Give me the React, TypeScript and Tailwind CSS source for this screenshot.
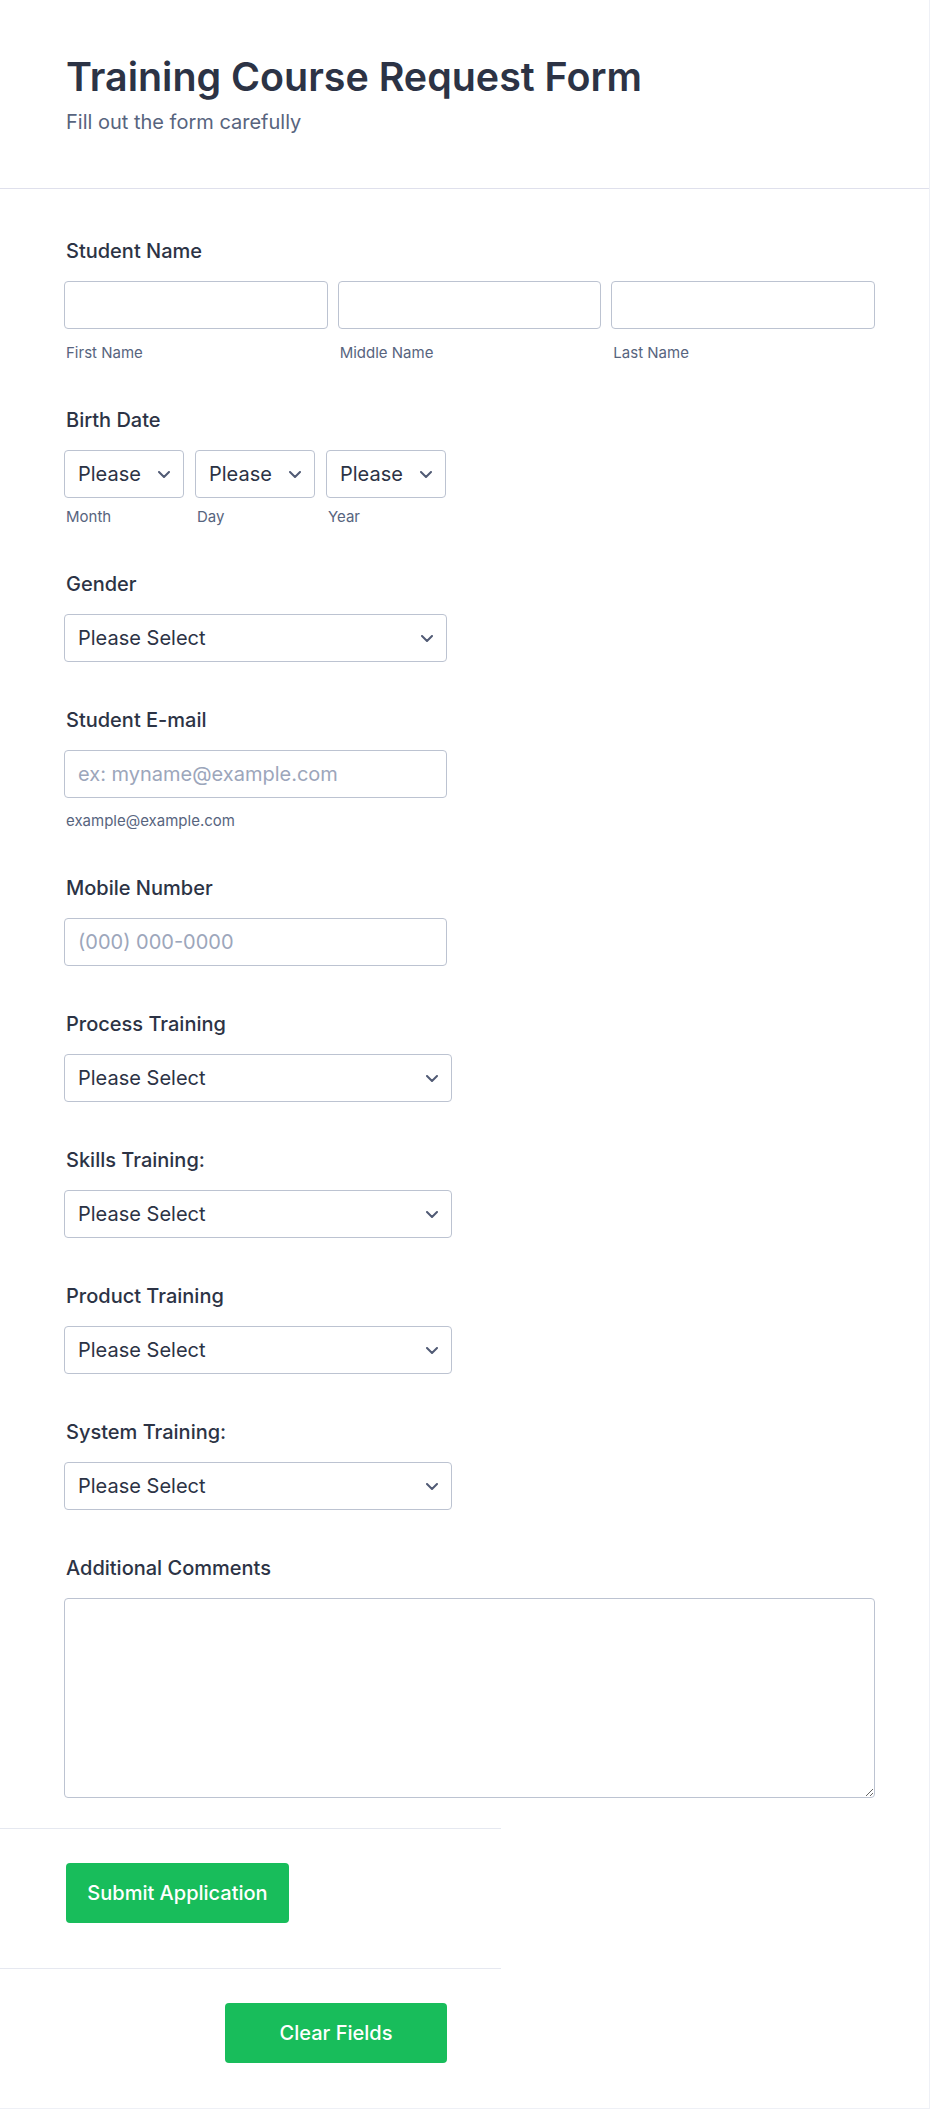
import React from "react";

const Chevron = () => (
  <svg
    viewBox="0 0 12 7"
    className="w-[12px] h-[7px] shrink-0 ml-[12px]"
    fill="none"
    stroke="#515b75"
    strokeWidth={2}
    strokeLinecap="round"
    strokeLinejoin="round"
  >
    <path d="M1 1l5 5 5-5" />
  </svg>
);

const Select = ({ className = "" }: { className?: string }) => (
  <div
    className={`flex items-center h-[48px] px-[13px] border border-[#bcc3d1] rounded-[4px] bg-white ${className}`}
  >
    <span className="flex-1 min-w-0 overflow-hidden whitespace-nowrap text-[20px] leading-[24px] text-[#2c3345]">
      Please Select
    </span>
    <Chevron />
  </div>
);

const Label = ({ children }: { children: React.ReactNode }) => (
  <div className="pl-[2px] mb-[18px] text-[20px] leading-[24px] font-medium text-[#2c3345]">
    {children}
  </div>
);

const SubLabel = ({
  children,
  className = "",
}: {
  children: React.ReactNode;
  className?: string;
}) => (
  <div className={`pl-[2px] text-[15px] leading-[18px] text-[#57647e] ${className}`}>
    {children}
  </div>
);

const inputClass =
  "block h-[48px] px-[13px] border border-[#bcc3d1] rounded-[4px] bg-white text-[20px] text-[#2c3345] placeholder:text-[#9ca6bb] outline-none";

export default function App() {
  return (
    <div className="w-[930px] min-h-[2109px] bg-white border-r border-b border-[#eef0f6] font-['Inter',sans-serif]">
      {/* header */}
      <div className="px-[64px] pt-[53px] pb-[54px] border-b border-[#dfe0ec]">
        <h1 className="pl-[2px] text-[39.4px] leading-[48px] font-semibold text-[#2c3345]">
          Training Course Request Form
        </h1>
        <p className="pl-[2px] mt-[9px] text-[20px] leading-[24px] text-[#57647e]">
          Fill out the form carefully
        </p>
      </div>

      {/* fields */}
      <div className="flex flex-col gap-[46px] pl-[64px] pr-[54px] pt-[50px] pb-[30px]">
        <div>
          <Label>Student Name</Label>
          <div className="grid grid-cols-3 gap-[10px]">
            {["First Name", "Middle Name", "Last Name"].map((s) => (
              <div key={s}>
                <input className={`${inputClass} w-full`} />
                <SubLabel className="mt-[15px]">{s}</SubLabel>
              </div>
            ))}
          </div>
        </div>

        <div>
          <Label>Birth Date</Label>
          <div className="flex gap-[11px]">
            {["Month", "Day", "Year"].map((s) => (
              <div key={s} className="w-[120px]">
                <Select />
                <SubLabel className="mt-[10px]">{s}</SubLabel>
              </div>
            ))}
          </div>
        </div>

        <div>
          <Label>Gender</Label>
          <Select className="w-[383px]" />
        </div>

        <div>
          <Label>Student E-mail</Label>
          <input
            className={`${inputClass} w-[383px]`}
            placeholder="ex: myname@example.com"
          />
          <SubLabel className="mt-[14px]">example@example.com</SubLabel>
        </div>

        <div>
          <Label>Mobile Number</Label>
          <input className={`${inputClass} w-[383px]`} placeholder="(000) 000-0000" />
        </div>

        {["Process Training", "Skills Training:", "Product Training", "System Training:"].map(
          (l) => (
            <div key={l}>
              <Label>{l}</Label>
              <Select className="w-[388px]" />
            </div>
          )
        )}

        <div>
          <Label>Additional Comments</Label>
          <textarea className="block w-full h-[200px] px-[13px] py-[10px] border border-[#bcc3d1] rounded-[4px] bg-white text-[20px] text-[#2c3345] outline-none" />
        </div>
      </div>

      {/* buttons */}
      <div className="w-[501px] border-t border-[#e5e8f0] pt-[34px] pb-[45px] pl-[66px]">
        <button className="h-[60px] w-[223px] rounded-[4px] bg-[#18bd5b] text-white text-[20px] font-medium">
          Submit Application
        </button>
      </div>
      <div className="w-[501px] border-t border-[#e5e8f0] pt-[34px] pb-[44px] pl-[225px]">
        <button className="h-[60px] w-[222px] rounded-[4px] bg-[#18bd5b] text-white text-[20px] font-medium">
          Clear Fields
        </button>
      </div>
    </div>
  );
}
